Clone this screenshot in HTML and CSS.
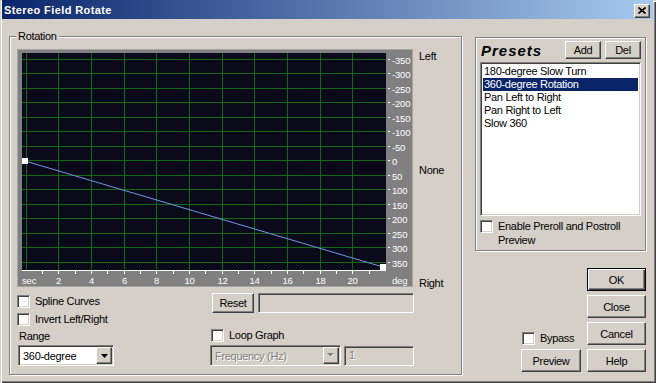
FILE: index.html
```html
<!DOCTYPE html>
<html lang="en">
<head>
  <meta charset="UTF-8">
  <title>Stereo Field Rotate</title>
  <link rel="stylesheet" href="styles.css">
</head>
<body>
  <div class="dialog">
    <!-- Title bar -->
    <div class="titlebar">
      <span class="title">Stereo Field Rotate</span>
      <button class="close-btn">
        <svg width="8" height="7" viewBox="0 0 8 7"><path d="M0.5 0.5 L7.5 6.5 M7.5 0.5 L0.5 6.5" stroke="#000" stroke-width="1.7"/></svg>
      </button>
    </div>

    <div class="content">
      <!-- Rotation group -->
      <div class="group rotation">
        <span class="group-label">Rotation</span>
        <div class="graph-row">
          <svg class="graph" width="396" height="238" viewBox="0 0 396 238">
            <rect x="0" y="0" width="396" height="238" fill="#808080"/>
            <rect x="0.5" y="0.5" width="395" height="237" fill="none" stroke="#a4a4a4"/>
            <rect x="5" y="4" width="364" height="217" fill="#0a0a1a"/>
            <g class="grid">
              <line x1="5" y1="10.5" x2="369" y2="10.5"/>
              <line x1="5" y1="24.5" x2="369" y2="24.5"/>
              <line x1="5" y1="39.5" x2="369" y2="39.5"/>
              <line x1="5" y1="53.5" x2="369" y2="53.5"/>
              <line x1="5" y1="68.5" x2="369" y2="68.5"/>
              <line x1="5" y1="82.5" x2="369" y2="82.5"/>
              <line x1="5" y1="97.5" x2="369" y2="97.5"/>
              <line x1="5" y1="111.5" x2="369" y2="111.5"/>
              <line x1="5" y1="126.5" x2="369" y2="126.5"/>
              <line x1="5" y1="140.5" x2="369" y2="140.5"/>
              <line x1="5" y1="155.5" x2="369" y2="155.5"/>
              <line x1="5" y1="169.5" x2="369" y2="169.5"/>
              <line x1="5" y1="184.5" x2="369" y2="184.5"/>
              <line x1="5" y1="198.5" x2="369" y2="198.5"/>
              <line x1="5" y1="213.5" x2="369" y2="213.5"/>
              <line x1="9.5" y1="4" x2="9.5" y2="221"/>
              <line x1="41.5" y1="4" x2="41.5" y2="221"/>
              <line x1="74.5" y1="4" x2="74.5" y2="221"/>
              <line x1="107.5" y1="4" x2="107.5" y2="221"/>
              <line x1="139.5" y1="4" x2="139.5" y2="221"/>
              <line x1="172.5" y1="4" x2="172.5" y2="221"/>
              <line x1="205.5" y1="4" x2="205.5" y2="221"/>
              <line x1="237.5" y1="4" x2="237.5" y2="221"/>
              <line x1="270.5" y1="4" x2="270.5" y2="221"/>
              <line x1="303.5" y1="4" x2="303.5" y2="221"/>
              <line x1="335.5" y1="4" x2="335.5" y2="221"/>
            </g>
            <g class="ticks">
              <line x1="5" y1="221.5" x2="369" y2="221.5"/>
              <line x1="25.5" y1="222" x2="25.5" y2="225"/>
              <line x1="41.5" y1="222" x2="41.5" y2="225"/>
              <line x1="58.5" y1="222" x2="58.5" y2="225"/>
              <line x1="74.5" y1="222" x2="74.5" y2="225"/>
              <line x1="90.5" y1="222" x2="90.5" y2="225"/>
              <line x1="107.5" y1="222" x2="107.5" y2="225"/>
              <line x1="123.5" y1="222" x2="123.5" y2="225"/>
              <line x1="139.5" y1="222" x2="139.5" y2="225"/>
              <line x1="156.5" y1="222" x2="156.5" y2="225"/>
              <line x1="172.5" y1="222" x2="172.5" y2="225"/>
              <line x1="188.5" y1="222" x2="188.5" y2="225"/>
              <line x1="205.5" y1="222" x2="205.5" y2="225"/>
              <line x1="221.5" y1="222" x2="221.5" y2="225"/>
              <line x1="237.5" y1="222" x2="237.5" y2="225"/>
              <line x1="254.5" y1="222" x2="254.5" y2="225"/>
              <line x1="270.5" y1="222" x2="270.5" y2="225"/>
              <line x1="286.5" y1="222" x2="286.5" y2="225"/>
              <line x1="303.5" y1="222" x2="303.5" y2="225"/>
              <line x1="319.5" y1="222" x2="319.5" y2="225"/>
              <line x1="335.5" y1="222" x2="335.5" y2="225"/>
              <line x1="352.5" y1="222" x2="352.5" y2="225"/>
              <line x1="371" y1="10.5" x2="373" y2="10.5"/>
              <line x1="371" y1="24.5" x2="373" y2="24.5"/>
              <line x1="371" y1="39.5" x2="373" y2="39.5"/>
              <line x1="371" y1="53.5" x2="373" y2="53.5"/>
              <line x1="371" y1="68.5" x2="373" y2="68.5"/>
              <line x1="371" y1="82.5" x2="373" y2="82.5"/>
              <line x1="371" y1="97.5" x2="373" y2="97.5"/>
              <line x1="371" y1="111.5" x2="373" y2="111.5"/>
              <line x1="371" y1="126.5" x2="373" y2="126.5"/>
              <line x1="371" y1="140.5" x2="373" y2="140.5"/>
              <line x1="371" y1="155.5" x2="373" y2="155.5"/>
              <line x1="371" y1="169.5" x2="373" y2="169.5"/>
              <line x1="371" y1="184.5" x2="373" y2="184.5"/>
              <line x1="371" y1="198.5" x2="373" y2="198.5"/>
              <line x1="371" y1="213.5" x2="373" y2="213.5"/>
            </g>
            <g class="axis-text">
              <text x="375" y="11">-350</text>
              <text x="375" y="25">-300</text>
              <text x="375" y="40">-250</text>
              <text x="375" y="54">-200</text>
              <text x="375" y="69">-150</text>
              <text x="375" y="83">-100</text>
              <text x="375" y="98">-50</text>
              <text x="375" y="112">0</text>
              <text x="375" y="127">50</text>
              <text x="375" y="141">100</text>
              <text x="375" y="156">150</text>
              <text x="375" y="170">200</text>
              <text x="375" y="185">250</text>
              <text x="375" y="199">300</text>
              <text x="375" y="214">350</text>
              <text x="5" y="231">sec</text>
              <text x="375" y="231">deg</text>
            </g>
            <g class="axis-text mid">
              <text x="41.5" y="231">2</text>
              <text x="74.5" y="231">4</text>
              <text x="107.5" y="231">6</text>
              <text x="139.5" y="231">8</text>
              <text x="172.5" y="231">10</text>
              <text x="205.5" y="231">12</text>
              <text x="237.5" y="231">14</text>
              <text x="270.5" y="231">16</text>
              <text x="303.5" y="231">18</text>
              <text x="335.5" y="231">20</text>
            </g>
            <line class="curve" x1="8" y1="112" x2="366" y2="218"/>
            <rect x="5" y="109" width="6" height="6" fill="#fff"/>
            <rect x="363" y="215" width="6" height="6" fill="#fff"/>
          </svg>
          <div class="pan-labels">
            <span>Left</span>
            <span>None</span>
            <span>Right</span>
          </div>
        </div>

        <div class="controls">
          <div class="col-left">
            <label class="check"><span class="box"></span>Spline Curves</label>
            <label class="check"><span class="box"></span>Invert Left/Right</label>
            <div class="range-label">Range</div>
            <div class="field combo range-combo">
              <span class="combo-text">360-degree</span>
              <span class="combo-arrow">
                <svg width="7" height="4" viewBox="0 0 7 4"><path d="M0 0h7L3.5 4z" fill="#000"/></svg>
              </span>
            </div>
          </div>
          <div class="col-mid">
            <div class="reset-row">
              <button class="btn reset-btn">Reset</button>
              <div class="field flat reset-field"></div>
            </div>
            <label class="check loop-check"><span class="box"></span>Loop Graph</label>
            <div class="freq-row">
              <div class="field flat combo freq-combo">
                <span class="combo-text disabled">Frequency (Hz)</span>
                <span class="combo-arrow">
                  <svg width="8" height="5" viewBox="0 0 8 5"><path d="M1 1h6L4 4z" fill="#fff"/><path d="M0 0h7L3.5 3.5z" fill="#808080"/></svg>
                </span>
              </div>
              <div class="field flat freq-field"><span class="disabled">1</span></div>
            </div>
          </div>
        </div>
      </div>

      <!-- Presets side -->
      <div class="side">
        <div class="group presets">
          <div class="presets-head">
            <span class="presets-title">Presets</span>
            <button class="btn small-btn">Add</button>
            <button class="btn small-btn">Del</button>
          </div>
          <ul class="field listbox">
            <li>180-degree Slow Turn</li>
            <li class="selected">360-degree Rotation</li>
            <li>Pan Left to Right</li>
            <li>Pan Right to Left</li>
            <li>Slow 360</li>
          </ul>
          <label class="check preroll"><span class="box"></span><span>Enable Preroll and Postroll Preview</span></label>
        </div>

        <div class="actions">
          <div class="preview-col">
            <label class="check bypass"><span class="box"></span>Bypass</label>
            <button class="btn wide-btn">Preview</button>
          </div>
          <div class="btn-col">
            <button class="btn wide-btn default">OK</button>
            <button class="btn wide-btn">Close</button>
            <button class="btn wide-btn">Cancel</button>
            <button class="btn wide-btn">Help</button>
          </div>
        </div>
      </div>
    </div>
  </div>
</body>
</html>
```

FILE: styles.css
```css
* {
  margin: 0;
  padding: 0;
  box-sizing: border-box;
}

body {
  background-color: #d4d0c8;
  font-family: "Liberation Sans", Arial, sans-serif;
  font-size: 11px;
  letter-spacing: -0.3px;
  color: #000;
}

.dialog {
  width: 656px;
  height: 383px;
  background-color: #d4d0c8;
  padding: 0 3px 0 2px;
  box-shadow: inset 1px 1px 0 #d4d0c8, inset 2px 2px 0 #fff, inset -1px -1px 0 #404040, inset -2px -2px 0 #808080;
  overflow: hidden;
}

/* Title bar */
.titlebar {
  height: 19px;
  display: flex;
  align-items: center;
  justify-content: space-between;
  padding: 0 3px 0 2px;
  background: linear-gradient(to right, #0a246a, #a6caf0);
}

.title {
  color: #fff;
  font-weight: bold;
  letter-spacing: 0.4px;
}

.close-btn {
  width: 16px;
  height: 14px;
  margin-top: 2px;
  display: flex;
  align-items: center;
  justify-content: center;
  background-color: #d4d0c8;
  border: 1px solid;
  border-color: #fff #404040 #404040 #fff;
  box-shadow: inset -1px -1px 0 #808080;
}

.content {
  display: flex;
  align-items: flex-start;
  padding-left: 7px;
}

/* Etched group boxes */
.group {
  border: 1px solid #808080;
  box-shadow: inset 1px 1px 0 #fff, 1px 1px 0 #fff;
}

.rotation {
  position: relative;
  width: 453px;
  height: 339px;
  margin-top: 17px;
  padding: 12px 0 0 7px;
}

.group-label {
  position: absolute;
  top: -7px;
  left: 6px;
  padding: 0 2px;
  line-height: 13px;
  background-color: #d4d0c8;
}

.graph-row {
  display: flex;
}

.graph {
  display: block;
  width: 396px;
  height: 238px;
}

.grid line {
  stroke: #116a11;
  stroke-width: 1;
  shape-rendering: crispEdges;
}

.ticks line {
  stroke: #fff;
  stroke-width: 1;
  shape-rendering: crispEdges;
}

.axis-text text {
  fill: #fff;
  font-size: 9.5px;
  letter-spacing: -0.2px;
  dominant-baseline: central;
}

.axis-text.mid text {
  text-anchor: middle;
}

.curve {
  stroke: #7396e6;
  stroke-width: 1;
}

.pan-labels {
  display: flex;
  flex-direction: column;
  justify-content: space-between;
  height: 241px;
  padding-top: 1px;
  margin-left: 6px;
  line-height: 13px;
}

/* Controls under the graph */
.controls {
  display: flex;
  margin-top: 3px;
}

.col-left {
  width: 193px;
  padding-top: 2px;
  display: flex;
  flex-direction: column;
  align-items: flex-start;
}

.col-mid {
  display: flex;
  flex-direction: column;
  align-items: flex-start;
}

.check {
  display: flex;
  align-items: center;
  gap: 5px;
  height: 13px;
  line-height: 13px;
}

.check + .check {
  margin-top: 5px;
}

.box {
  flex: none;
  width: 13px;
  height: 13px;
  background-color: #fff;
  border: 1px solid;
  border-color: #808080 #fff #fff #808080;
  box-shadow: inset 1px 1px 0 #404040, inset -1px -1px 0 #d4d0c8;
}

.range-label {
  margin-top: 4px;
  margin-left: 2px;
  line-height: 13px;
}

.field {
  background-color: #fff;
  border: 1px solid;
  border-color: #808080 #fff #fff #808080;
  box-shadow: inset 1px 1px 0 #404040, inset -1px -1px 0 #d4d0c8;
}

.field.flat {
  background-color: #d4d0c8;
}

.combo {
  display: flex;
  align-items: center;
  padding: 1px;
}

.combo-text {
  flex: 1;
  padding-left: 3px;
}

.combo-arrow {
  flex: none;
  width: 16px;
  height: 17px;
  display: flex;
  align-items: center;
  justify-content: center;
  background-color: #d4d0c8;
  border: 1px solid;
  border-color: #fff #404040 #404040 #fff;
  box-shadow: inset -1px -1px 0 #808080;
}

.range-combo {
  width: 96px;
  height: 21px;
  margin-top: 2px;
  margin-left: 1px;
}

.disabled {
  color: #808080;
  text-shadow: 1px 1px 0 #fff;
}

.reset-row {
  display: flex;
  margin-left: 2px;
}

.reset-btn {
  width: 42px;
  height: 20px;
}

.reset-field {
  width: 156px;
  height: 20px;
  margin-left: 4px;
}

.loop-check {
  margin-top: 16px;
  margin-left: 1px;
}

.freq-row {
  display: flex;
  margin-top: 3px;
}

.freq-combo {
  width: 131px;
  height: 21px;
}

.freq-field {
  width: 70px;
  height: 20px;
  margin-top: 1px;
  margin-left: 3px;
  padding: 2px 0 0 4px;
}

/* Buttons */
.btn {
  font: inherit;
  letter-spacing: inherit;
  color: #000;
  background-color: #d4d0c8;
  border: 1px solid;
  border-color: #fff #404040 #404040 #fff;
  box-shadow: inset -1px -1px 0 #808080;
}

.btn.default {
  border-color: #000;
  box-shadow: inset 1px 1px 0 #fff, inset -1px -1px 0 #404040, inset -2px -2px 0 #808080;
}

/* Presets side */
.side {
  width: 171px;
  margin-left: 13px;
  margin-top: 18px;
}

.presets {
  height: 214px;
  padding: 3px 4px 0 4px;
}

.presets-head {
  display: flex;
  align-items: center;
  gap: 4px;
  height: 18px;
}

.presets-title {
  flex: 1;
  margin-left: 1px;
  font-size: 15px;
  font-weight: bold;
  font-style: italic;
  letter-spacing: 1px;
}

.small-btn {
  width: 36px;
  height: 18px;
}

.listbox {
  list-style: none;
  height: 154px;
  margin-top: 3px;
  padding: 2px 2px 0 2px;
}

.listbox li {
  line-height: 13px;
  padding-left: 1px;
}

.listbox li.selected {
  background-color: #0a246a;
  color: #fff;
}

.preroll {
  align-items: flex-start;
  height: auto;
  margin-top: 3px;
  line-height: 14px;
}

.preroll .box {
  margin-top: 1px;
}

.actions {
  display: flex;
  justify-content: flex-end;
  align-items: flex-end;
  gap: 6px;
  margin-top: 17px;
}

.preview-col {
  display: flex;
  flex-direction: column;
  align-items: flex-start;
}

.bypass {
  margin-left: 1px;
  margin-bottom: 4px;
}

.btn-col {
  display: flex;
  flex-direction: column;
  gap: 4px;
}

.wide-btn {
  width: 59px;
  height: 23px;
}

.preview-col .wide-btn {
  width: 60px;
}
```
